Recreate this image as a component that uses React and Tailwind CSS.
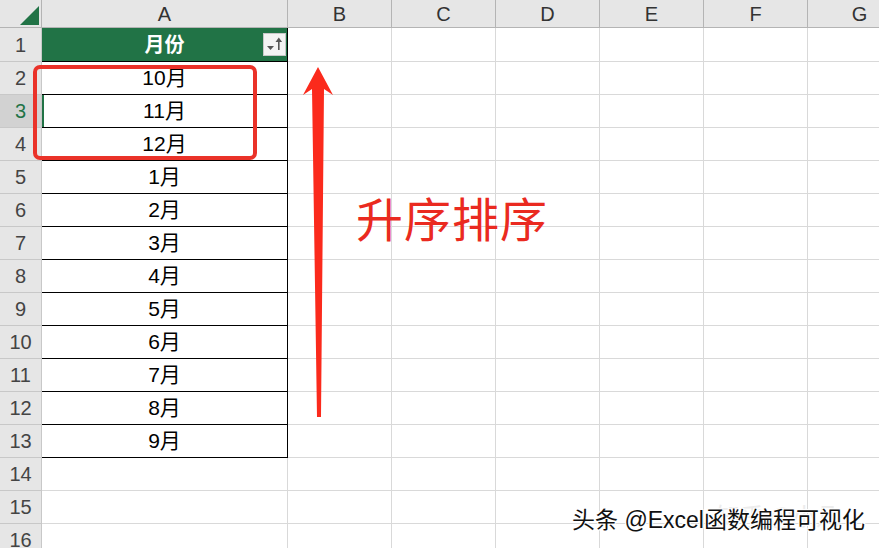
import React from 'react';

const cols = ['B', 'C', 'D', 'E', 'F', 'G'];
const months = ['10月', '11月', '12月', '1月', '2月', '3月', '4月', '5月', '6月', '7月', '8月', '9月'];
const font = { fontFamily: '"Liberation Sans", "Noto Sans CJK SC", sans-serif' };

function FilterButton() {
    return (
        <div className="ml-auto mr-[1px] flex h-[23px] w-[23px] items-center justify-center border border-[#c8c8c8] bg-[#f3f3f3]">
            <svg width="21" height="21" viewBox="0 0 21 21">
                <polygon points="3,12 10,12 6.5,16" fill="#555" />
                <rect x="14" y="5" width="1.6" height="11" fill="#555" />
                <polygon points="11.5,8 14.8,3.5 18.1,8" fill="#555" />
            </svg>
        </div>
    );
}

function Row({ n, height, children, selected }) {
    return (
        <div className="flex" style={{ height }}>
            <div
                className={`flex w-[42px] shrink-0 items-center justify-center border-r border-b border-[#c8c8c8] text-[20px] ${selected ? 'bg-[#d2d2d2] text-[#217346]' : 'bg-[#e6e6e6] text-[#444]'}`}
            >
                {n}
            </div>
            {children}
            {cols.map((c) => (
                <div key={c} className="w-[104px] shrink-0 border-r border-b border-[#d9d9d9]" />
            ))}
        </div>
    );
}

export default function App() {
    return (
        <div className="relative h-[548px] w-[879px] overflow-hidden bg-white text-black" style={font}>
            {/* Column headers */}
            <div className="flex h-[28px]">
                <div className="relative w-[42px] shrink-0 border-r border-b border-[#b4b4b4] bg-[#e6e6e6]">
                    <svg className="absolute left-0 top-0" width="42" height="28" viewBox="0 0 42 28">
                        <polygon points="20,25 39,25 39,6" fill="#217346" />
                    </svg>
                </div>
                <div className="flex w-[246px] shrink-0 items-center justify-center border-r border-b border-[#b4b4b4] bg-[#e6e6e6] text-[20px] text-[#333]">
                    A
                </div>
                {cols.map((c) => (
                    <div
                        key={c}
                        className="flex w-[104px] shrink-0 items-center justify-center border-r border-b border-[#b4b4b4] bg-[#e6e6e6] text-[20px] text-[#333]"
                    >
                        {c}
                    </div>
                ))}
            </div>

            {/* Row 1 header cell */}
            <Row n={1} height={34}>
                <div className="relative flex w-[246px] shrink-0 items-center border-r border-b border-black bg-[#217346]">
                    <span className="absolute inset-0 flex items-center justify-center text-[20px] font-bold text-white">月份</span>
                    <FilterButton />
                </div>
            </Row>

            {months.map((m, i) => (
                <Row key={m} n={i + 2} height={33} selected={i === 1}>
                    <div
                        className={`flex w-[246px] shrink-0 items-center justify-center border-r border-b border-black text-[21px] ${i === 1 ? 'shadow-[inset_2px_0_0_#217346]' : ''}`}
                    >
                        {m}
                    </div>
                </Row>
            ))}

            {[14, 15, 16].map((n) => (
                <Row key={n} n={n} height={33}>
                    <div className="w-[246px] shrink-0 border-r border-b border-[#d9d9d9]" />
                </Row>
            ))}

            {/* Annotations */}
            <div className="absolute left-[33px] top-[65px] h-[95px] w-[224px] rounded-[7px] border-[4px] border-[#ea3229]" />

            <svg className="absolute left-0 top-0" width="879" height="548" viewBox="0 0 879 548">
                <polygon
                    points="318,67 333,95 324,89 321,417 317,417 312,89 303,95"
                    fill="#fb2a1c"
                />
            </svg>

            <div
                className="absolute left-[356px] top-[193px] text-[47px] leading-none tracking-[1px] text-[#ea2a20]"
                style={{ fontFamily: '"Noto Sans CJK SC", sans-serif' }}
            >
                升序排序
            </div>

            <div
                className="absolute left-[716px] top-[503px] text-[24px] leading-none text-[#ececec]"
                style={{ fontFamily: '"Noto Sans CJK SC", sans-serif' }}
            >
                知乎 @小凡
            </div>

            <div
                className="absolute left-[572px] top-[509px] text-[23px] leading-none text-[#111]"
                style={{
                    fontFamily: '"Liberation Sans", "Noto Sans CJK SC", sans-serif',
                    textShadow: '1px 1px 0 #fff, -1px -1px 0 #fff, 1px -1px 0 #fff, -1px 1px 0 #fff',
                }}
            >
                头条 @Excel函数编程可视化
            </div>
        </div>
    );
}
